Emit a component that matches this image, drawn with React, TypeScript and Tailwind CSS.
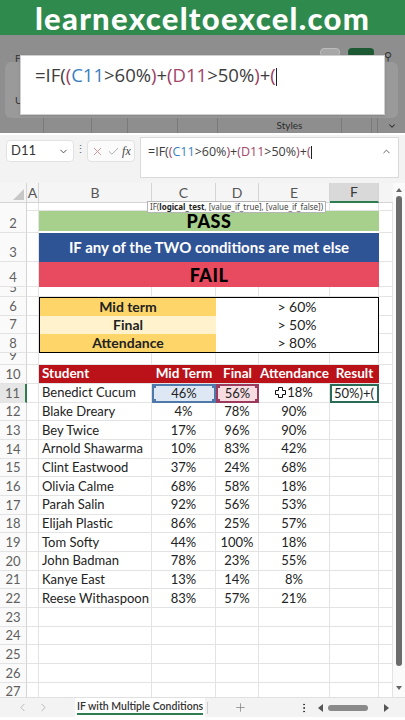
import React from 'react';
import { ChevronDown, ChevronUp, X, Check, Plus, ChevronLeft, ChevronRight, EllipsisVertical } from 'lucide-react';

const cellFont = { fontFamily: 'Lato, "Open Sans", Arial, sans-serif' };

const students = [
  { n: 12, name: 'Blake Dreary', mid: '4%', fin: '78%', att: '90%' },
  { n: 13, name: 'Bey Twice', mid: '17%', fin: '96%', att: '90%' },
  { n: 14, name: 'Arnold Shawarma', mid: '10%', fin: '83%', att: '42%' },
  { n: 15, name: 'Clint Eastwood', mid: '37%', fin: '24%', att: '68%' },
  { n: 16, name: 'Olivia Calme', mid: '68%', fin: '58%', att: '18%' },
  { n: 17, name: 'Parah Salin', mid: '92%', fin: '56%', att: '53%' },
  { n: 18, name: 'Elijah Plastic', mid: '86%', fin: '25%', att: '57%' },
  { n: 19, name: 'Tom Softy', mid: '44%', fin: '100%', att: '18%' },
  { n: 20, name: 'John Badman', mid: '78%', fin: '23%', att: '55%' },
  { n: 21, name: 'Kanye East', mid: '13%', fin: '14%', att: '8%' },
  { n: 22, name: 'Reese Withaspoon', mid: '83%', fin: '57%', att: '21%' },
];

const criteria = [
  { n: 6, label: 'Mid term', value: '> 60%', light: false },
  { n: 7, label: 'Final', value: '> 50%', light: true },
  { n: 8, label: 'Attendance', value: '> 80%', light: false },
];

function RowHdr({ n, active }: { n: number; active?: boolean }) {
  return (
    <div
      className={`w-[27px] shrink-0 flex items-end justify-center pb-[2px] text-[13px] leading-none text-[#5f5f5f] border-b border-[#e3e3e3] overflow-hidden ${
        active ? 'bg-[#e6e6e6] border-r-2 border-r-[#2e7d4f]' : 'bg-[#fafafa] border-r border-r-[#d4d4d4]'
      }`}
    >
      {n}
    </div>
  );
}

const grid = 'border-r border-b border-[#e3e3e3]';

function Blank({ w }: { w: string }) {
  return <div className={`${w} shrink-0 ${grid}`} />;
}

function EmptyRow({ n, h }: { n: number; h: string }) {
  return (
    <div className={`${h} shrink-0 flex overflow-hidden`}>
      <RowHdr n={n} />
      <Blank w="w-[12px]" />
      <Blank w="w-[113px]" />
      <Blank w="w-[64px]" />
      <Blank w="w-[43px]" />
      <Blank w="w-[71px]" />
      <Blank w="w-[49px]" />
      <Blank w="w-[14px]" />
    </div>
  );
}

function Formula() {
  const paren = 'text-[#9b3b60]';
  return (
    <span className="whitespace-nowrap">
      <span className="text-[#3d3d3d]">=IF(</span>
      <span className={paren}>(</span>
      <span className="text-[#3b7fbf]">C11</span>
      <span className="text-[#3d3d3d]">&gt;60%</span>
      <span className={paren}>)</span>
      <span className="text-[#3d3d3d]">+</span>
      <span className={paren}>(</span>
      <span className="text-[#a2466a]">D11</span>
      <span className="text-[#3d3d3d]">&gt;50%</span>
      <span className={paren}>)</span>
      <span className="text-[#3d3d3d]">+</span>
      <span className={paren}>(</span>
      <span className="inline-block w-[1px] h-[1em] bg-[#222] align-middle" />
    </span>
  );
}

function MoveCursor() {
  return (
    <svg width="11" height="11" viewBox="0 0 11 11" className="inline-block mr-[1px]">
      <path d="M3.5 0.5h4v3h3v4h-3v3h-4v-3h-3v-4h3z" fill="white" stroke="#111" strokeWidth="1" />
    </svg>
  );
}

function Handles({ color }: { color: string }) {
  return (
    <>
      <span className={`absolute -left-[2px] -top-[2px] w-[4px] h-[4px] ${color}`} />
      <span className={`absolute -right-[2px] -top-[2px] w-[4px] h-[4px] ${color}`} />
      <span className={`absolute -left-[2px] -bottom-[2px] w-[4px] h-[4px] ${color}`} />
      <span className={`absolute -right-[2px] -bottom-[2px] w-[4px] h-[4px] ${color}`} />
    </>
  );
}

export default function App() {
  return (
    <div className="w-[405px] h-[720px] overflow-hidden flex flex-col bg-white" style={cellFont}>
      {/* site banner */}
      <div className="h-[35px] shrink-0 bg-[#2f8a4e] flex items-center justify-center">
        <span className="text-white text-[31px] font-black tracking-[1.3px] leading-[32px] whitespace-nowrap">
          learnexceltoexcel.com
        </span>
      </div>

      {/* dimmed ribbon with zoomed formula */}
      <div className="h-[100px] shrink-0 bg-[#8e8e8e] relative overflow-hidden">
        <span className="absolute left-[15px] top-[16px] text-[10px] text-[#333]">F</span>
        <div className="absolute left-[320px] top-[13px] w-[20px] h-[9px] rounded-sm bg-[#a7a7a7] border border-[#bcbcbc]" />
        <div className="absolute left-[348px] top-[13px] w-[26px] h-[9px] rounded-sm bg-[#1d5a34]" />
        <span className="absolute left-[384px] top-[13px] text-[11px] text-[#333]">⚲</span>
        <div className="absolute left-[5px] right-[7px] top-[27px] h-[56px] rounded-md bg-[#9a9a9a]" />
        <span className="absolute left-[15px] top-[58px] text-[10px] text-[#333]">U</span>
        <div className="absolute left-0 right-0 top-[83px] h-[15px] flex items-center text-[10px] text-[#2c2c2c]">
          <div className="w-[44px] h-full border-r border-[#7a7a7a]" />
          <div className="w-[48px] h-full border-r border-[#7a7a7a]" />
          <div className="w-[36px] h-full border-r border-[#7a7a7a]" />
          <div className="w-[50px] h-full border-r border-[#7a7a7a]" />
          <div className="w-[40px] h-full border-r border-[#7a7a7a]" />
          <div className="w-[124px] h-full border-r border-[#7a7a7a] flex items-center justify-center pl-[20px]">Styles</div>
          <div className="w-[30px] h-full border-r border-[#7a7a7a]" />
          <div className="w-[6px] h-full border-r border-[#7a7a7a]" />
          <div className="flex-1 flex items-center justify-center">
            <ChevronDown size={10} strokeWidth={2.5} />
          </div>
        </div>
        <div className="absolute left-0 right-0 bottom-0 h-[2px] bg-white" />
        {/* zoom popup */}
        <div className="absolute left-[20px] top-[20px] w-[365px] h-[60px] bg-white border border-[#d0d0d0] shadow-sm pl-[14px] pt-[7px]">
          <div className="text-[18.5px] leading-[24px]" style={{ fontFamily: '"Open Sans", "Noto Sans", sans-serif' }}>
            <Formula />
          </div>
        </div>
      </div>

      {/* formula bar */}
      <div className="h-[48px] shrink-0 bg-[#f3f3f3] flex items-start text-[#333]">
        <div className="ml-[6px] mt-[5px] w-[68px] h-[22px] bg-white border border-[#e2e2e2] rounded flex items-center justify-between px-[4px]">
          <span className="text-[13px]">D11</span>
          <ChevronDown size={11} strokeWidth={2} className="text-[#444]" />
        </div>
        <span className="w-[13px] mt-[8px] text-center text-[11px] text-[#666] leading-none">⋮</span>
        <div className="mt-[5px] w-[48px] h-[22px] bg-[#fbfbfb] border border-[#e2e2e2] rounded flex items-center justify-around px-[2px]">
          <X size={13} strokeWidth={1.6} className="text-[#c88a8a]" />
          <Check size={13} strokeWidth={1.6} className="text-[#9aa9a0]" />
          <span className="text-[12px] italic text-[#444]" style={{ fontFamily: '"Liberation Serif", serif' }}>fx</span>
        </div>
        <div className="ml-[5px] mt-[2px] w-[259px] h-[41px] bg-white border border-[#dadada] flex items-start justify-between pl-[7px] pr-[6px] pt-[6px]">
          <span className="text-[12.5px] leading-[16px]" style={{ fontFamily: '"Open Sans", "Noto Sans", sans-serif' }}>
            <Formula />
          </span>
          <ChevronUp size={11} strokeWidth={2} className="text-[#555] mt-[2px]" />
        </div>
      </div>

      {/* sheet grid */}
      <div className="flex-1 flex overflow-hidden min-h-0">
        <div className="w-[393px] shrink-0 flex flex-col relative text-[13px] text-[#222]">
          {/* column headers */}
          <div className="h-[20px] shrink-0 flex bg-[#f5f5f5] text-[14px] text-[#555] leading-none">
            <div className="w-[27px] shrink-0 relative border-r border-b border-[#d4d4d4]">
              <div className="absolute right-[2px] bottom-[2px] w-0 h-0 border-l-[11px] border-l-transparent border-b-[11px] border-b-[#c7c7c7]" />
            </div>
            <div className="w-[12px] shrink-0 flex items-center justify-center border-r border-b border-[#d4d4d4]">A</div>
            <div className="w-[113px] shrink-0 flex items-center justify-center border-r border-b border-[#d4d4d4]">B</div>
            <div className="w-[64px] shrink-0 flex items-center justify-center border-r border-b border-[#d4d4d4]">C</div>
            <div className="w-[43px] shrink-0 flex items-center justify-center border-r border-b border-[#d4d4d4]">D</div>
            <div className="w-[71px] shrink-0 flex items-center justify-center border-r border-b border-[#d4d4d4]">E</div>
            <div className="w-[49px] shrink-0 flex items-center justify-center bg-[#d9d9d9] text-[#3a3a3a] border-r border-b-2 border-r-[#d4d4d4] border-b-[#2e7d4f]">F</div>
            <div className="w-[14px] shrink-0 border-b border-[#d4d4d4]" />
          </div>

          {/* row 1, mostly hidden under the tooltip */}
          <div className="h-[8px] shrink-0 flex overflow-hidden">
            <div className="w-[27px] shrink-0 bg-[#fafafa] border-r border-[#d4d4d4]" />
            <Blank w="w-[12px]" />
            <Blank w="w-[113px]" />
            <Blank w="w-[64px]" />
            <Blank w="w-[43px]" />
            <Blank w="w-[71px]" />
            <Blank w="w-[49px]" />
            <Blank w="w-[14px]" />
          </div>

          {/* rows 2-4 banner */}
          <div className="h-[22px] shrink-0 flex">
            <RowHdr n={2} />
            <Blank w="w-[12px]" />
            <div className="w-[340px] shrink-0 bg-[#a8d08d] border-b-2 border-white flex items-center justify-center text-[18px] leading-none font-black text-black tracking-[0.5px]">
              PASS
            </div>
            <Blank w="w-[14px]" />
          </div>
          <div className="h-[29px] shrink-0 flex">
            <RowHdr n={3} />
            <Blank w="w-[12px]" />
            <div className="w-[340px] shrink-0 bg-[#2f5496] flex items-center justify-center text-[15px] leading-none font-bold text-white">
              IF any of the TWO conditions are met else
            </div>
            <Blank w="w-[14px]" />
          </div>
          <div className="h-[25px] shrink-0 flex">
            <RowHdr n={4} />
            <Blank w="w-[12px]" />
            <div className="w-[340px] shrink-0 bg-[#e84a5f] flex items-center justify-center text-[18px] leading-none font-black text-black tracking-[0.5px]">
              FAIL
            </div>
            <Blank w="w-[14px]" />
          </div>

          <EmptyRow n={5} h="h-[10px]" />

          {/* criteria table */}
          <div className="h-[56px] flex shrink-0">
            <div className="flex flex-col">
              {criteria.map((c) => (
                <div key={c.n} className="h-[18.67px] flex">
                  <RowHdr n={c.n} />
                  <Blank w="w-[12px]" />
                </div>
              ))}
            </div>
            <div className="w-[340px] h-[56px] shrink-0 border-[1.5px] border-black flex flex-col">
              {criteria.map((c) => (
                <div key={c.n} className="flex-1 min-h-0 flex text-[14px] leading-none font-bold text-[#222]">
                  <div className={`w-[176px] flex items-center justify-center ${c.light ? 'bg-[#fff2cc]' : 'bg-[#fdd568]'}`}>{c.label}</div>
                  <div className="flex-1 flex items-center justify-center font-normal">{c.value}</div>
                </div>
              ))}
            </div>
            <div className="flex flex-col">
              {criteria.map((c) => (
                <div key={c.n} className="h-[18.67px] flex">
                  <Blank w="w-[14px]" />
                </div>
              ))}
            </div>
          </div>

          <EmptyRow n={9} h="h-[12px]" />

          {/* row 10 header */}
          <div className="h-[19px] shrink-0 flex">
            <RowHdr n={10} />
            <Blank w="w-[12px]" />
            <div className="w-[340px] shrink-0 flex bg-[#bb1219] text-white font-bold text-[13.5px] leading-none border-b border-[#e3e3e3]">
              <div className="w-[113px] pl-[3px] flex items-center">Student</div>
              <div className="w-[64px] flex items-center justify-center whitespace-nowrap">Mid Term</div>
              <div className="w-[43px] flex items-center justify-center">Final</div>
              <div className="w-[71px] flex items-center justify-center whitespace-nowrap">Attendance</div>
              <div className="w-[49px] flex items-center justify-center">Result</div>
            </div>
            <Blank w="w-[14px]" />
          </div>

          {/* row 11 active */}
          <div className="h-[18.67px] shrink-0 flex leading-none">
            <RowHdr n={11} active />
            <Blank w="w-[12px]" />
            <div className={`w-[113px] shrink-0 ${grid} pl-[3px] flex items-center whitespace-nowrap`}>Benedict Cucum</div>
            <div className="w-[64px] shrink-0 relative bg-[#dde8f4] border-2 border-[#4f79aa] flex items-center justify-center">
              46%
              <Handles color="bg-[#4f79aa]" />
            </div>
            <div className="w-[43px] shrink-0 relative bg-[#f7dde2] border-2 border-[#9b3a5c] flex items-center justify-center">
              56%
              <Handles color="bg-[#9b3a5c]" />
            </div>
            <div className={`w-[71px] shrink-0 ${grid} flex items-center justify-center`}>
              <MoveCursor />
              18%
            </div>
            <div className="w-[49px] shrink-0 border-2 border-[#2a6b55] flex items-center pl-[2px] whitespace-nowrap overflow-hidden">50%)+(</div>
            <Blank w="w-[14px]" />
          </div>

          {/* data rows */}
          {students.map((s) => (
            <div key={s.n} className="h-[18.67px] shrink-0 flex leading-none">
              <RowHdr n={s.n} />
              <Blank w="w-[12px]" />
              <div className={`w-[113px] shrink-0 ${grid} pl-[3px] flex items-center whitespace-nowrap`}>{s.name}</div>
              <div className={`w-[64px] shrink-0 ${grid} flex items-center justify-center`}>{s.mid}</div>
              <div className={`w-[43px] shrink-0 ${grid} flex items-center justify-center`}>{s.fin}</div>
              <div className={`w-[71px] shrink-0 ${grid} flex items-center justify-center`}>{s.att}</div>
              <Blank w="w-[49px]" />
              <Blank w="w-[14px]" />
            </div>
          ))}

          {[23, 24, 25, 26, 27].map((n) => (
            <EmptyRow key={n} n={n} h="h-[18.67px]" />
          ))}

          {/* function tooltip */}
          <div className="absolute left-[147px] top-[18px] h-[12px] px-[2px] bg-white border border-[#b5b5b5] text-[8px] leading-[10px] text-[#444] whitespace-nowrap" style={{ fontFamily: '"Noto Sans", sans-serif' }}>
            IF(<b className="text-[#222]">logical_test</b>, [value_if_true], [value_if_false])
          </div>
        </div>

        {/* vertical scrollbar */}
        <div className="w-[12px] shrink-0 bg-[#fafafa] flex flex-col items-center">
          <div className="mt-[5px] w-0 h-0 border-l-[3px] border-l-transparent border-r-[3px] border-r-transparent border-b-[4px] border-b-[#666]" />
          <div className="mt-[4px] w-[6px] h-[470px] rounded-full bg-[#6b6b6b]" />
          <div className="mt-[20px] w-0 h-0 border-l-[3px] border-l-transparent border-r-[3px] border-r-transparent border-t-[4px] border-t-[#666]" />
        </div>
      </div>

      {/* sheet tabs */}
      <div className="h-[20px] shrink-0 w-full bg-[#f3f3f3] border-t border-[#e0e0e0] flex items-center">
        <div className="w-[75px] shrink-0 flex items-center gap-[8px] pl-[16px] text-[#aaaaaa]">
          <ChevronLeft size={13} strokeWidth={1.5} />
          <ChevronRight size={13} strokeWidth={1.5} />
        </div>
        <div className="w-[130px] shrink-0 h-full bg-white flex items-center justify-center">
          <span className="text-[10.5px] font-semibold text-[#333] leading-[13px] border-b-2 border-[#2e7d4f] whitespace-nowrap">
            IF with Multiple Conditions
          </span>
        </div>
        <div className="w-[1px] h-[12px] bg-[#cfcfcf] ml-[2px] shrink-0" />
        <div className="w-[64px] shrink-0 flex justify-center text-[#888]">
          <Plus size={13} strokeWidth={1.5} />
        </div>
        <div className="ml-[25px] w-[14px] shrink-0 flex justify-center text-[#333]">
          <EllipsisVertical size={12} strokeWidth={2} />
        </div>
        <div className="ml-[7px] shrink-0 w-0 h-0 border-t-[4px] border-t-transparent border-b-[4px] border-b-transparent border-r-[5px] border-r-[#555]" />
        <div className="ml-[5px] shrink-0 w-[40px] h-[6px] rounded-full bg-[#8a8a8a]" />
        <div className="ml-[16px] shrink-0 w-0 h-0 border-t-[4px] border-t-transparent border-b-[4px] border-b-transparent border-l-[5px] border-l-[#555]" />
      </div>
      <div className="h-[3px] shrink-0 bg-white" />
    </div>
  );
}
